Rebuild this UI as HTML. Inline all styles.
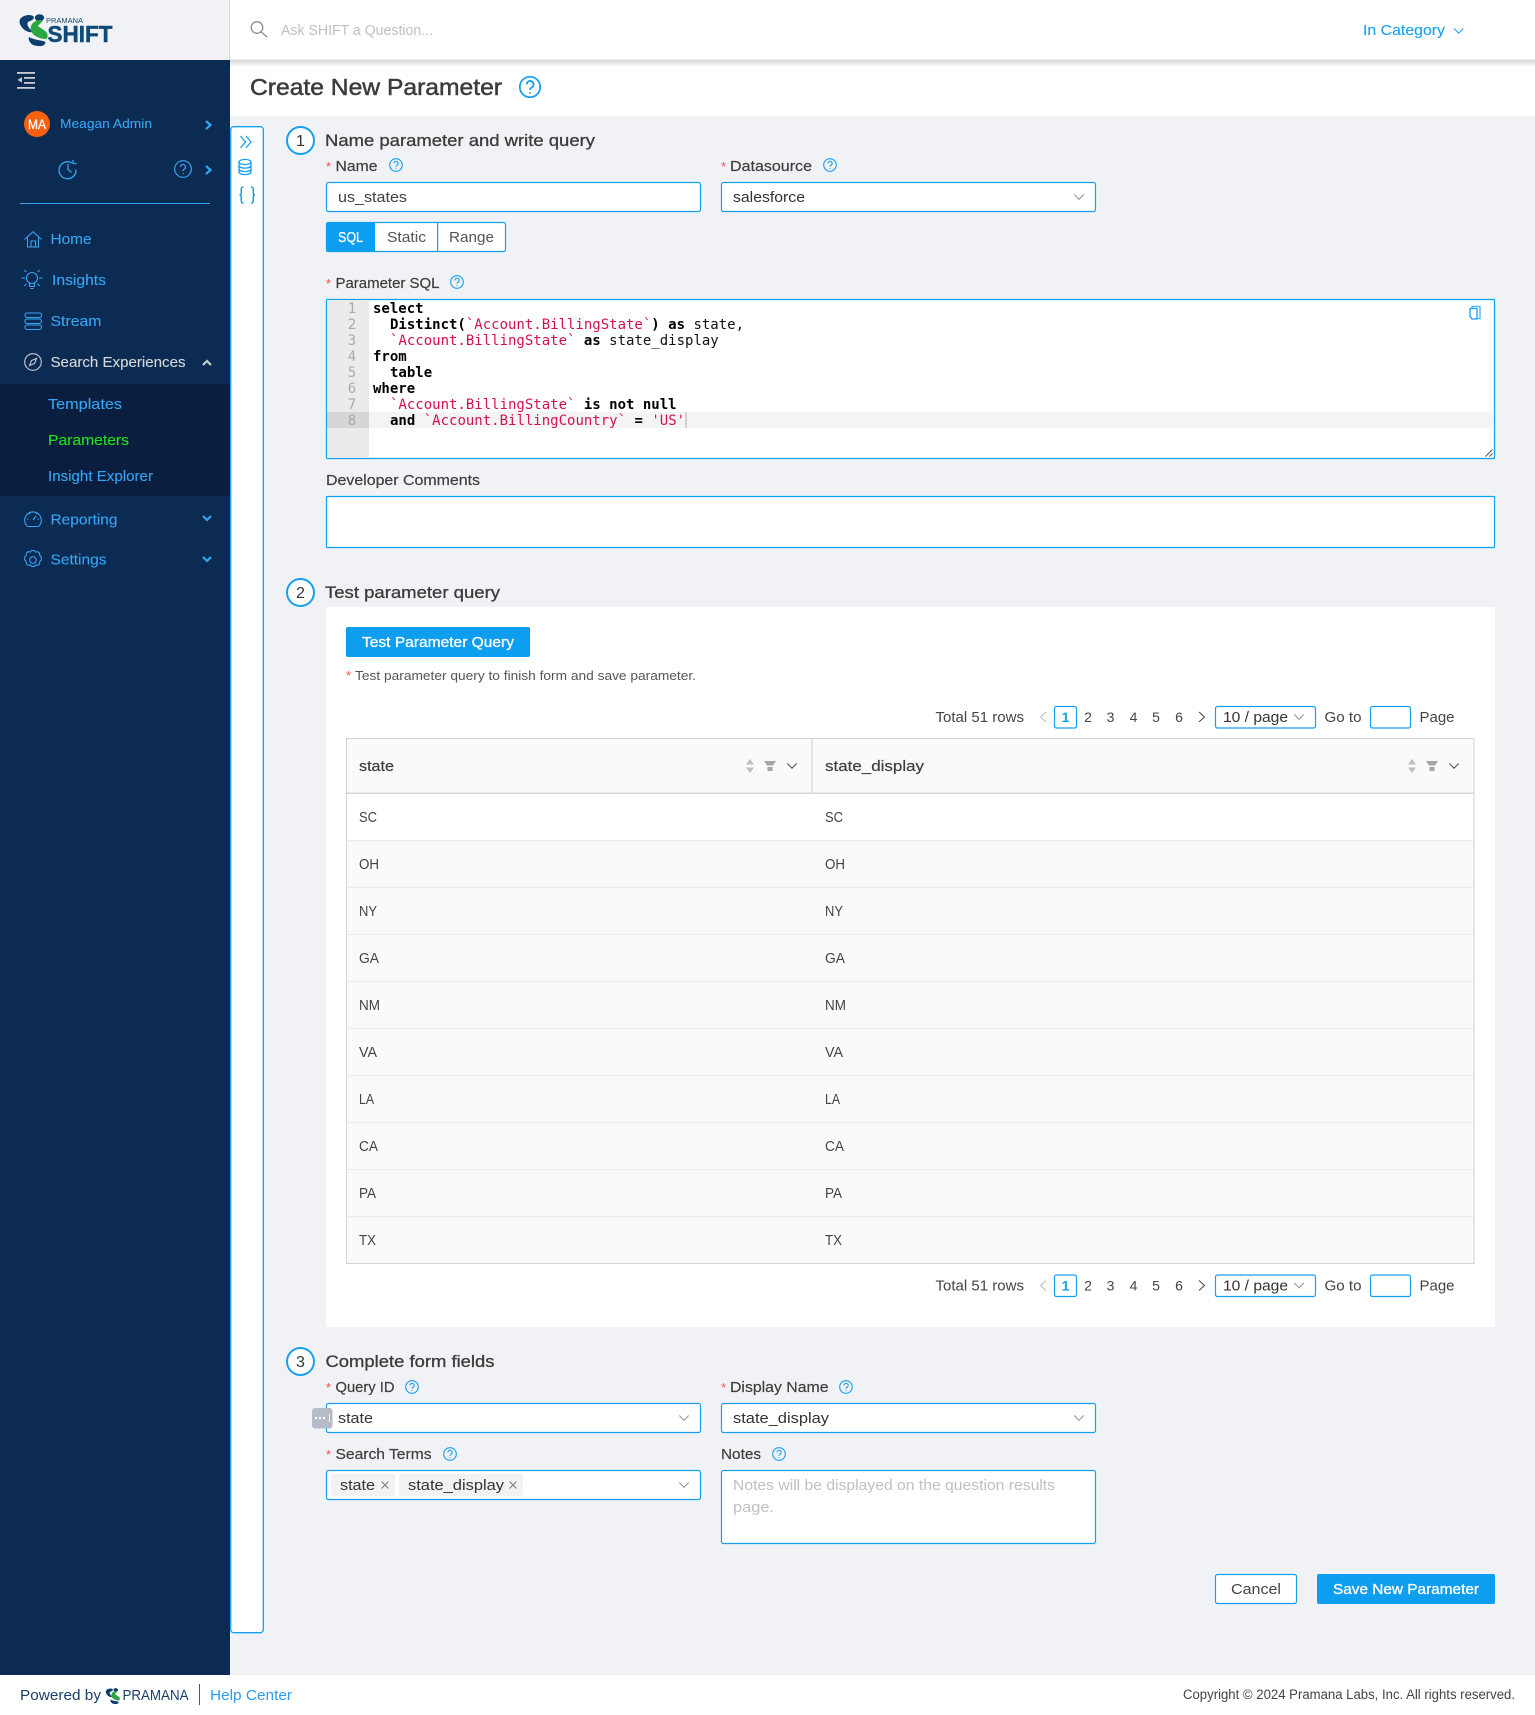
<!DOCTYPE html>
<html lang="en"><head><meta charset="utf-8"><title>Create New Parameter</title>
<style>
html,body{margin:0;padding:0;background:#f0f2f6;width:1535px;height:1715px;overflow:hidden}
svg{display:block}
text{font-family:"Liberation Sans",sans-serif;font-size:14.5px;fill:currentColor;color:#444;white-space:pre}
.m{stroke:currentColor;stroke-width:.3px}
.b{color:#37a4f1;stroke:currentColor;stroke-width:.12px}.w{color:#fff}.h{color:#3c3c3c;font-size:16.5px}
.l{color:#3f3f3f;stroke:currentColor;stroke-width:.2px}.s{color:#ff4d4f;font-size:13px}
.c{font-family:"DejaVu Sans Mono","Liberation Mono",monospace;font-size:14px;color:#111}
.c .k{font-weight:bold;color:#000}.c .r{fill:#d3124f}
.n{font-family:"DejaVu Sans Mono","Liberation Mono",monospace;font-size:14px;color:#aaa;text-anchor:middle}
.p{color:#444;text-anchor:middle;font-size:14px}
.ph{color:#c0c0c0}
</style></head><body>
<svg xmlns="http://www.w3.org/2000/svg" width="1535" height="1715" viewBox="0 0 1535 1715">
<defs>
<linearGradient id="sh" x1="0" y1="0" x2="0" y2="1"><stop offset="0" stop-color="#000" stop-opacity=".16"/><stop offset="1" stop-color="#000" stop-opacity="0"/></linearGradient>
<g id="q" fill="none" stroke="#179ff0" stroke-width="1.1"><circle r="6.3"/><path d="M-2-1.6a2.1 2.1 0 1 1 3.3 1.7C.5.6 0 .9 0 1.8"/><path d="M0 3.2v.9"/></g>
<g id="cd" fill="none" stroke="#8c8c8c" stroke-width="1"><path d="M-4.700-2.500 0 2.300 4.700-2.500"/></g>
<g id="cdk" fill="none" stroke="#444" stroke-width="1"><path d="M-4.700-2.500 0 2.300 4.700-2.500"/></g>
<g id="sb" fill="none" stroke="#37a4f1" stroke-width="2.2"><path d="M-2.5-4 2 0-2.5 4"/></g>
<g id="sd" fill="none" stroke="#37a4f1" stroke-width="2.2"><path d="M-4-2 0 2 4-2"/></g>
<g id="srt"><path d="M-4-1.5 0-7 4-1.5z M-4 1.5 0 7 4 1.5z" fill="#bfbfbf"/></g>
<g id="flt"><path d="M-6-5H6L3-.5H-3z M-2.5 1h5v4h-5z" fill="#a6a6a6"/></g>
<g id="pag">
<text x="935.5" y="722" textLength="88.500" lengthAdjust="spacingAndGlyphs">Total 51 rows</text>
<path d="M1046 712l-5.500 5 5.500 5" fill="none" stroke="#bbb" stroke-width="1"/>
<rect x="1054.500" y="706.500" width="22" height="21.500" rx="2" fill="#fff" stroke="#179ff0" stroke-width="1.200"/>
<text x="1065.500" y="722" class="p" style="color:#179ff0;font-weight:bold">1</text>
<text x="1088" y="722" class="p">2</text><text x="1110.500" y="722" class="p">3</text><text x="1133.500" y="722" class="p">4</text><text x="1156" y="722" class="p">5</text><text x="1179" y="722" class="p">6</text>
<path d="M1199 712l5.500 5-5.500 5" fill="none" stroke="#444" stroke-width="1"/>
<rect x="1215.500" y="706.500" width="100" height="21.500" rx="2" fill="#fff" stroke="#179ff0" stroke-width="1.200"/>
<text x="1223" y="722" textLength="65" lengthAdjust="spacingAndGlyphs" style="color:#333">10 / page</text>
<use href="#cd" x="1299" y="717"/>
<text x="1324.500" y="722" textLength="37" lengthAdjust="spacingAndGlyphs">Go to</text>
<rect x="1370.500" y="706.500" width="40" height="21.500" rx="2" fill="#fff" stroke="#179ff0" stroke-width="1.200"/>
<text x="1419.500" y="722" textLength="35" lengthAdjust="spacingAndGlyphs">Page</text>
</g>
<g id="lg">
<path d="M21 18c3-3 9-4 12-2 2 2 0 4-3 5-3 1-3 3-2 5 1 3 4 4 4 6-3 1-9-2-11-6-2-3-2-6 0-8z" fill="#0d3f6e"/>
<ellipse cx="39.500" cy="17.800" rx="4.600" ry="3.600" fill="#0d3f6e"/>
<path d="M33 23c3-3 8-4 9-2 1 1-3 3-4 5 2 2 7 4 9 7 1 2 1 5-1 6-6 0-13-3-15-8-1-3 0-6 2-8z" fill="#2aa83f"/>
<path d="M29 37c3 2 9 3 14 4 3 .5 3 2 1 4-3 2-8 1-11 0-3-2-5-5-4-8z" fill="#0d3f6e"/>
</g>
</defs>

<!-- page background -->
<rect width="1535" height="1715" fill="#f0f2f6"/>
<rect x="230" y="60" width="1305" height="56" fill="#fff"/>
<rect x="230" y="60" width="1305" height="7" fill="url(#sh)"/>
<rect x="230" y="0" width="1305" height="60" fill="#fff"/>
<rect x="230" y="59.500" width="1305" height="1" fill="#ddd"/>

<!-- logo header -->
<rect width="230" height="60" fill="#f0f2f5"/>
<rect x="229" width="1" height="60" fill="#d4d4d4"/>
<use href="#lg"/>
<text x="46" y="23" textLength="37" lengthAdjust="spacingAndGlyphs" style="font-size:7px;color:#0f4a78">PRAMANA</text>
<text x="47.500" y="42" textLength="65" lengthAdjust="spacingAndGlyphs" style="font-size:23px;font-weight:bold;color:#0f4a78;stroke:#0f4a78;stroke-width:.5px">SHIFT</text>

<!-- search header -->
<g fill="none" stroke="#8c8c8c" stroke-width="1.300"><circle cx="257" cy="27.500" r="5.800"/><path d="M261.300 32 267 37"/></g>
<text x="281" y="35" textLength="152" lengthAdjust="spacingAndGlyphs" class="ph">Ask SHIFT a Question...</text>
<text x="1363" y="35" textLength="82" lengthAdjust="spacingAndGlyphs" style="color:#179ff0;stroke:#179ff0;stroke-width:.12px">In Category</text>
<path d="M1454 28.500l4.700 4.700 4.700-4.700" fill="none" stroke="#179ff0" stroke-width="1"/>

<!-- sidebar -->
<rect y="60" width="230" height="1615" fill="#0c2b52"/>
<rect y="384" width="230" height="112" fill="#0a1f3f"/>
<g fill="#c9ccd1"><rect x="17" y="72" width="18" height="1.800"/><rect x="24" y="77" width="11" height="1.800"/><rect x="24" y="82" width="11" height="1.800"/><rect x="17" y="87" width="18" height="1.800"/><path d="M22 77v5.500L17.500 80z"/></g>
<circle cx="37" cy="124" r="13" fill="#f9600f"/>
<text x="28" y="129" textLength="18" lengthAdjust="spacingAndGlyphs" class="w m" style="font-size:13.500px">MA</text>
<text x="60" y="128" textLength="92" lengthAdjust="spacingAndGlyphs" class="b" style="font-size:13px">Meagan Admin</text>
<use href="#sb" x="208.500" y="125"/>
<g fill="none" stroke="#37a4f1" stroke-width="1.300"><path d="M72 163a8.500 8.500 0 1 0 4 6.500"/><path d="M68 164v5.500l3.500 3"/><path d="M73 160v3.500h3.500"/></g>
<circle cx="183" cy="169" r="8.300" fill="none" stroke="#37a4f1" stroke-width="1.200"/>
<path d="M180.500 167a2.500 2.500 0 1 1 3.800 2.100c-.9.500-1.300 1-1.300 2M183 173v1" fill="none" stroke="#37a4f1" stroke-width="1.200"/>
<use href="#sb" x="208.500" y="170"/>
<rect x="20" y="203" width="190" height="1" fill="#37a4f1"/>

<g fill="none" stroke="#37a4f1" stroke-width="1.100">
<path d="M24.500 239.500l8.500-7.800 8.500 7.800M27.500 237.500V247h11v-9.500M31 247v-6h4.500v6"/>
<circle cx="32" cy="278" r="5.500"/><path d="M29.500 283.500h5v3h-5zM30.500 288.500h3M25 278h-3.500M42.500 278h-3.500M26.500 272l-2.500-2M37.500 272l2.500-2M26.500 284l-2.500 2M37.500 284l2.500 2"/>
<rect x="25" y="313" width="16.500" height="4.500" rx="2"/><rect x="25" y="319" width="16.500" height="4.500" rx="2"/><rect x="25" y="325" width="16.500" height="4.500" rx="2"/>
<path d="M27.500 526.500h11a8.300 8.300 0 1 0-11 0zM33 520l3-4M27 519h1.500M39 519h-1.500M29 513l1 1.300M37 513l-1 1.300"/>
<circle cx="33" cy="560" r="3.300"/><path d="M30.500 552l1-1.500h3l1 1.500 2.500-.3 1.500 1.300.3 2.500 1.500 1.500v3l-1.500 1.500-.3 2.500-1.500 1.300-2.500-.3-1 1.500h-3l-1-1.500-2.500.3-1.500-1.300-.3-2.500-1.500-1.500v-3l1.500-1.500.3-2.500 1.500-1.300z"/>
</g>
<g fill="none" stroke="#c8cbd0" stroke-width="1.100"><circle cx="33" cy="362" r="8.300"/><path d="M36.500 358.500 34.500 363.500 29.500 365.500 31.500 360.500z"/></g>

<text x="50.500" y="244" textLength="41" lengthAdjust="spacingAndGlyphs" class="b">Home</text>
<text x="52" y="285" textLength="54" lengthAdjust="spacingAndGlyphs" class="b">Insights</text>
<text x="50.500" y="326" textLength="51" lengthAdjust="spacingAndGlyphs" class="b">Stream</text>
<text x="50.500" y="367" textLength="135" lengthAdjust="spacingAndGlyphs" style="color:#d4d6d9;stroke:#d4d6d9;stroke-width:.12px">Search Experiences</text>
<text x="48" y="409" textLength="74" lengthAdjust="spacingAndGlyphs" class="b">Templates</text>
<text x="48" y="445" textLength="81" lengthAdjust="spacingAndGlyphs" style="color:#1ee31e;stroke:#1ee31e;stroke-width:.12px">Parameters</text>
<text x="48" y="481" textLength="105" lengthAdjust="spacingAndGlyphs" class="b">Insight Explorer</text>
<text x="50.500" y="524.500" textLength="67" lengthAdjust="spacingAndGlyphs" class="b">Reporting</text>
<text x="50.500" y="564.500" textLength="56" lengthAdjust="spacingAndGlyphs" class="b">Settings</text>
<path d="M203 365l4-4 4 4" fill="none" stroke="#c8cbd0" stroke-width="2.200"/>
<use href="#sd" x="207" y="518"/><use href="#sd" x="207" y="559"/>

<!-- side strip -->
<rect x="230.700" y="126.700" width="32.600" height="1506" rx="3" fill="#fff" stroke="#179ff0" stroke-width="1.300"/>
<g fill="none" stroke="#179ff0" stroke-width="1.300">
<path d="M240.500 136l5 6-5 6M246 136l5 6-5 6"/>
<ellipse cx="245" cy="162" rx="6" ry="2.600"/><path d="M239 162v10c0 1.500 2.700 2.600 6 2.600s6-1.100 6-2.600v-10M239 165.500c0 1.500 2.700 2.600 6 2.600s6-1.100 6-2.600M239 169c0 1.500 2.700 2.600 6 2.600s6-1.100 6-2.600"/>
<path stroke-width="1.500" d="M243.500 187c-2 0-2.300 1-2.300 2.500v3c0 1.500-.5 2.500-1.700 2.500 1.200 0 1.700 1 1.700 2.500v3c0 1.500.3 2.500 2.300 2.500M251 187c2 0 2.300 1 2.300 2.500v3c0 1.500.5 2.500 1.700 2.500-1.200 0-1.700 1-1.700 2.500v3c0 1.500-.3 2.500-2.300 2.500"/>
</g>

<!-- title -->
<text x="250" y="95" textLength="252" lengthAdjust="spacingAndGlyphs" class="m" style="font-size:23px;color:#3c3c3c;stroke-width:.5px">Create New Parameter</text>
<use href="#q" transform="translate(530 87) scale(1.620)"/>

<!-- section 1 -->
<circle cx="300.500" cy="140.500" r="13.500" fill="#fff" stroke="#179ff0" stroke-width="2"/>
<text x="300.500" y="146" style="text-anchor:middle;font-size:16px;color:#333">1</text>
<text x="325" y="146" textLength="270" lengthAdjust="spacingAndGlyphs" class="h m">Name parameter and write query</text>

<text x="326" y="171" class="s">*</text>
<text x="335.500" y="171" textLength="42" lengthAdjust="spacingAndGlyphs" class="l">Name</text>
<use href="#q" x="396" y="165"/>
<text x="721" y="171" class="s">*</text>
<text x="730" y="171" textLength="82" lengthAdjust="spacingAndGlyphs" class="l">Datasource</text>
<use href="#q" x="830" y="165"/>

<rect x="326.500" y="182.500" width="374" height="29" rx="2" fill="#fff" stroke="#179ff0" stroke-width="1.200"/>
<text x="338" y="202" textLength="69" lengthAdjust="spacingAndGlyphs" style="color:#3f3f3f">us_states</text>
<rect x="721.500" y="182.500" width="374" height="29" rx="2" fill="#fff" stroke="#179ff0" stroke-width="1.200"/>
<text x="733" y="202" textLength="72" lengthAdjust="spacingAndGlyphs" style="color:#333">salesforce</text>
<use href="#cd" x="1079" y="197"/>

<rect x="326.500" y="222.500" width="179" height="29" rx="2" fill="#fff" stroke="#179ff0" stroke-width="1.200"/>
<path d="M328 222h47v30h-47a2 2 0 0 1-2-2v-26a2 2 0 0 1 2-2z" fill="#0d9ef0"/>
<rect x="437" y="222.500" width="1.200" height="29" fill="#179ff0"/>
<text x="338" y="242" textLength="25" lengthAdjust="spacingAndGlyphs" class="w m">SQL</text>
<text x="387" y="242" textLength="39" lengthAdjust="spacingAndGlyphs" style="color:#555">Static</text>
<text x="449" y="242" textLength="45" lengthAdjust="spacingAndGlyphs" style="color:#555">Range</text>

<text x="326" y="288" class="s">*</text>
<text x="335.500" y="288" textLength="104" lengthAdjust="spacingAndGlyphs" class="l">Parameter SQL</text>
<use href="#q" x="457" y="282"/>

<rect x="326.500" y="299.500" width="1168" height="159" rx="1" fill="#fff" stroke="#0da3f5" stroke-width="1.300"/>
<rect x="327" y="300" width="42" height="158" fill="#ebebeb"/>
<rect x="369" y="412" width="1125" height="16" fill="#f4f4f4"/>
<rect x="327" y="412" width="42" height="16" fill="#d6d6d6"/>
<g class="nums">
<text x="352" y="313" class="n">1</text><text x="352" y="329" class="n">2</text><text x="352" y="345" class="n">3</text><text x="352" y="361" class="n">4</text><text x="352" y="377" class="n">5</text><text x="352" y="393" class="n">6</text><text x="352" y="409" class="n">7</text><text x="352" y="425" class="n">8</text>
</g>
<text x="373" y="313" class="c"><tspan class="k">select</tspan></text>
<text x="390" y="329" class="c"><tspan class="k">Distinct(</tspan><tspan class="r">`Account.BillingState`</tspan><tspan class="k">) as</tspan> state,</text>
<text x="390" y="345" class="c"><tspan class="r">`Account.BillingState`</tspan> <tspan class="k">as</tspan> state_display</text>
<text x="373" y="361" class="c"><tspan class="k">from</tspan></text>
<text x="390" y="377" class="c"><tspan class="k">table</tspan></text>
<text x="373" y="393" class="c"><tspan class="k">where</tspan></text>
<text x="390" y="409" class="c"><tspan class="r">`Account.BillingState`</tspan> <tspan class="k">is not null</tspan></text>
<text x="390" y="425" class="c"><tspan class="k">and</tspan> <tspan class="r">`Account.BillingCountry`</tspan> <tspan class="k">=</tspan> <tspan class="r">'US'</tspan></text>
<rect x="685.500" y="412" width="1" height="16" fill="#aaa"/>
<g fill="#fff" stroke="#3fb4ff" stroke-width="1.300"><rect x="1472" y="306.500" width="8" height="12"/><path d="M1470 308.500h7v10.500h-5l-2-2.500z" stroke="#179ff0"/></g>
<path d="M1485.500 456.500l7-7M1489.500 456.500l3-3" stroke="#555" stroke-width="1" fill="none"/>

<text x="326" y="485" textLength="154" lengthAdjust="spacingAndGlyphs" class="l">Developer Comments</text>
<rect x="326.500" y="496.500" width="1168" height="51" rx="1" fill="#fff" stroke="#0da3f5" stroke-width="1.200"/>

<!-- section 2 -->
<circle cx="300.500" cy="592.500" r="13.500" fill="#fff" stroke="#179ff0" stroke-width="2"/>
<text x="300.500" y="598" style="text-anchor:middle;font-size:16px;color:#333">2</text>
<text x="325" y="598" textLength="175" lengthAdjust="spacingAndGlyphs" class="h m">Test parameter query</text>

<rect x="326" y="607" width="1169" height="720" rx="2" fill="#fff"/>
<rect x="346" y="627" width="184" height="30" rx="2" fill="#0d9ef0"/>
<text x="362" y="647" textLength="152" lengthAdjust="spacingAndGlyphs" class="w m">Test Parameter Query</text>
<text x="346" y="680" class="s">*</text>
<text x="355" y="680" textLength="341" lengthAdjust="spacingAndGlyphs" style="font-size:13px;color:#555">Test parameter query to finish form and save parameter.</text>

<use href="#pag"/>

<!-- table -->
<rect x="346.500" y="738.500" width="1127.500" height="525" fill="#fff" stroke="#d2d2d2"/>
<rect x="347" y="739" width="1126.500" height="54" fill="#fafafa"/>
<rect x="347" y="840" width="1126.500" height="423" fill="#fafafa"/>
<rect x="347" y="792.500" width="1126.500" height="1.500" fill="#d6d6d6"/>
<rect x="811.500" y="739" width="1.200" height="54" fill="#d6d6d6"/>
<g fill="#ececec"><rect x="347" y="840" width="1126.500" height="1"/><rect x="347" y="887" width="1126.500" height="1"/><rect x="347" y="934" width="1126.500" height="1"/><rect x="347" y="981" width="1126.500" height="1"/><rect x="347" y="1028" width="1126.500" height="1"/><rect x="347" y="1075" width="1126.500" height="1"/><rect x="347" y="1122" width="1126.500" height="1"/><rect x="347" y="1169" width="1126.500" height="1"/><rect x="347" y="1216" width="1126.500" height="1"/></g>
<text x="359" y="771" textLength="35" lengthAdjust="spacingAndGlyphs" class="l m">state</text>
<text x="825" y="771" textLength="99" lengthAdjust="spacingAndGlyphs" class="l m">state_display</text>
<use href="#srt" x="750" y="766"/><use href="#flt" x="770" y="766"/><use href="#cdk" x="792" y="766"/>
<use href="#srt" x="1412" y="766"/><use href="#flt" x="1432" y="766"/><use href="#cdk" x="1454" y="766"/>

<text x="359" y="822" textLength="18" lengthAdjust="spacingAndGlyphs">SC</text><text x="825" y="822" textLength="18" lengthAdjust="spacingAndGlyphs">SC</text>
<text x="359" y="869" textLength="20" lengthAdjust="spacingAndGlyphs">OH</text><text x="825" y="869" textLength="20" lengthAdjust="spacingAndGlyphs">OH</text>
<text x="359" y="916" textLength="18" lengthAdjust="spacingAndGlyphs">NY</text><text x="825" y="916" textLength="18" lengthAdjust="spacingAndGlyphs">NY</text>
<text x="359" y="963" textLength="20" lengthAdjust="spacingAndGlyphs">GA</text><text x="825" y="963" textLength="20" lengthAdjust="spacingAndGlyphs">GA</text>
<text x="359" y="1010" textLength="21" lengthAdjust="spacingAndGlyphs">NM</text><text x="825" y="1010" textLength="21" lengthAdjust="spacingAndGlyphs">NM</text>
<text x="359" y="1057" textLength="18" lengthAdjust="spacingAndGlyphs">VA</text><text x="825" y="1057" textLength="18" lengthAdjust="spacingAndGlyphs">VA</text>
<text x="359" y="1104" textLength="15" lengthAdjust="spacingAndGlyphs">LA</text><text x="825" y="1104" textLength="15" lengthAdjust="spacingAndGlyphs">LA</text>
<text x="359" y="1151" textLength="19" lengthAdjust="spacingAndGlyphs">CA</text><text x="825" y="1151" textLength="19" lengthAdjust="spacingAndGlyphs">CA</text>
<text x="359" y="1198" textLength="17" lengthAdjust="spacingAndGlyphs">PA</text><text x="825" y="1198" textLength="17" lengthAdjust="spacingAndGlyphs">PA</text>
<text x="359" y="1245" textLength="17" lengthAdjust="spacingAndGlyphs">TX</text><text x="825" y="1245" textLength="17" lengthAdjust="spacingAndGlyphs">TX</text>

<use href="#pag" y="568.500"/>

<!-- section 3 -->
<circle cx="300.500" cy="1361.500" r="13.500" fill="#fff" stroke="#179ff0" stroke-width="2"/>
<text x="300.500" y="1367" style="text-anchor:middle;font-size:16px;color:#333">3</text>
<text x="325.500" y="1367" textLength="169" lengthAdjust="spacingAndGlyphs" class="h m">Complete form fields</text>

<text x="326" y="1392" class="s">*</text>
<text x="335.500" y="1392" textLength="59" lengthAdjust="spacingAndGlyphs" class="l">Query ID</text>
<use href="#q" x="412" y="1387"/>
<text x="721" y="1392" class="s">*</text>
<text x="730" y="1392" textLength="98.500" lengthAdjust="spacingAndGlyphs" class="l">Display Name</text>
<use href="#q" x="846" y="1387"/>

<rect x="326.500" y="1403.500" width="374" height="29" rx="2" fill="#fff" stroke="#179ff0" stroke-width="1.200"/>
<rect x="312" y="1408" width="20.500" height="20.500" rx="3" fill="#b5bcc8"/>
<g fill="#fff"><circle cx="316" cy="1418" r="1.200"/><circle cx="320" cy="1418" r="1.200"/><circle cx="324" cy="1418" r="1.200"/><rect x="329" y="1414" width="1" height="8"/></g>
<text x="338" y="1423" textLength="35" lengthAdjust="spacingAndGlyphs" style="color:#333">state</text>
<use href="#cd" x="684" y="1418"/>
<rect x="721.500" y="1403.500" width="374" height="29" rx="2" fill="#fff" stroke="#179ff0" stroke-width="1.200"/>
<text x="733" y="1423" textLength="96" lengthAdjust="spacingAndGlyphs" style="color:#333">state_display</text>
<use href="#cd" x="1079" y="1418"/>

<text x="326" y="1459" class="s">*</text>
<text x="335.500" y="1459" textLength="96" lengthAdjust="spacingAndGlyphs" class="l">Search Terms</text>
<use href="#q" x="450" y="1454"/>
<text x="721" y="1459" textLength="40" lengthAdjust="spacingAndGlyphs" class="l">Notes</text>
<use href="#q" x="779" y="1454"/>

<rect x="326.500" y="1470.500" width="374" height="29" rx="2" fill="#fff" stroke="#179ff0" stroke-width="1.200"/>
<rect x="331" y="1474" width="64" height="22" rx="2" fill="#f2f2f2"/>
<text x="340" y="1490" textLength="35" lengthAdjust="spacingAndGlyphs" style="color:#333">state</text>
<path d="M381.500 1481.500l7 7M388.500 1481.500l-7 7" stroke="#777" stroke-width="1"/>
<rect x="399" y="1474" width="124" height="22" rx="2" fill="#f2f2f2"/>
<text x="408" y="1490" textLength="96" lengthAdjust="spacingAndGlyphs" style="color:#333">state_display</text>
<path d="M509.500 1481.500l7 7M516.500 1481.500l-7 7" stroke="#777" stroke-width="1"/>
<use href="#cd" x="684" y="1485"/>

<rect x="721.500" y="1470.500" width="374" height="73" rx="2" fill="#fff" stroke="#179ff0" stroke-width="1.200"/>
<text x="733" y="1490" textLength="322" lengthAdjust="spacingAndGlyphs" class="ph">Notes will be displayed on the question results</text>
<text x="733" y="1512" textLength="41" lengthAdjust="spacingAndGlyphs" class="ph">page.</text>

<rect x="1215.500" y="1574.500" width="81" height="29" rx="2" fill="#fff" stroke="#179ff0" stroke-width="1.200"/>
<text x="1231" y="1594" textLength="50" lengthAdjust="spacingAndGlyphs">Cancel</text>
<rect x="1317" y="1574" width="178" height="30" rx="2" fill="#0d9ef0"/>
<text x="1333" y="1594" textLength="146" lengthAdjust="spacingAndGlyphs" class="w m">Save New Parameter</text>

<!-- footer -->
<rect y="1675" width="1535" height="40" fill="#fff"/>
<text x="20" y="1700" textLength="81" lengthAdjust="spacingAndGlyphs" style="color:#1c3f66">Powered by</text>
<use href="#lg" transform="translate(96 1681) scale(.5)"/>
<text x="122.500" y="1700" textLength="66" lengthAdjust="spacingAndGlyphs" style="color:#1c3f66">PRAMANA</text>
<rect x="199" y="1684" width="1" height="21" fill="#555"/>
<text x="210" y="1700" textLength="82" lengthAdjust="spacingAndGlyphs" style="color:#2b9cf0">Help Center</text>
<text x="1183" y="1699" textLength="332" lengthAdjust="spacingAndGlyphs" style="font-size:13.500px;color:#444">Copyright © 2024 Pramana Labs, Inc. All rights reserved.</text>
</svg>
</body></html>
